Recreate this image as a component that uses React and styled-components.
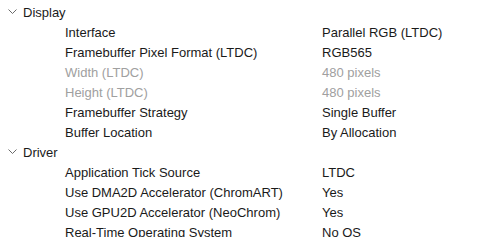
import React from 'react';
import styled, { createGlobalStyle } from 'styled-components';

const Global = createGlobalStyle`
  html, body { margin: 0; padding: 0; background: #ffffff; }
  body { font-family: "Liberation Sans", Arial, sans-serif; overflow: hidden; }
`;

const Tree = styled.div`
  padding-top: 2px;
  width: 494px;
  height: 237px;
  overflow: hidden;
`;

const GroupRow = styled.div`
  display: flex;
  align-items: center;
  height: 20px;
  font-size: 13px;
  color: #1a1a1a;
`;

const Chevron = styled.span`
  width: 23px;
  display: flex;
  justify-content: center;
  padding-left: 2px;
  box-sizing: border-box;
`;

const Row = styled.div`
  display: grid;
  grid-template-columns: 257px 1fr;
  height: 20px;
  align-items: center;
  padding-left: 65px;
  font-size: 13px;
  color: ${(p) => (p.$disabled ? '#a0a0a0' : '#1a1a1a')};
  white-space: nowrap;
`;

const groups = [
  {
    name: 'Display',
    items: [
      ['Interface', 'Parallel RGB (LTDC)'],
      ['Framebuffer Pixel Format (LTDC)', 'RGB565'],
      ['Width (LTDC)', '480 pixels', true],
      ['Height (LTDC)', '480 pixels', true],
      ['Framebuffer Strategy', 'Single Buffer'],
      ['Buffer Location', 'By Allocation'],
    ],
  },
  {
    name: 'Driver',
    items: [
      ['Application Tick Source', 'LTDC'],
      ['Use DMA2D Accelerator (ChromART)', 'Yes'],
      ['Use GPU2D Accelerator (NeoChrom)', 'Yes'],
      ['Real-Time Operating System', 'No OS'],
    ],
  },
];

function ChevronIcon() {
  return (
    <svg width="9" height="6" viewBox="0 0 9 6">
      <path d="M0.5 0.5 L4.5 4.5 L8.5 0.5" fill="none" stroke="#6a6a6a" strokeWidth="1" />
    </svg>
  );
}

export default function App() {
  return (
    <>
      <Global />
      <Tree>
        {groups.map((g) => (
          <React.Fragment key={g.name}>
            <GroupRow>
              <Chevron><ChevronIcon /></Chevron>
              {g.name}
            </GroupRow>
            {g.items.map(([k, v, d]) => (
              <Row key={k} $disabled={d}>
                <span>{k}</span>
                <span>{v}</span>
              </Row>
            ))}
          </React.Fragment>
        ))}
      </Tree>
    </>
  );
}
